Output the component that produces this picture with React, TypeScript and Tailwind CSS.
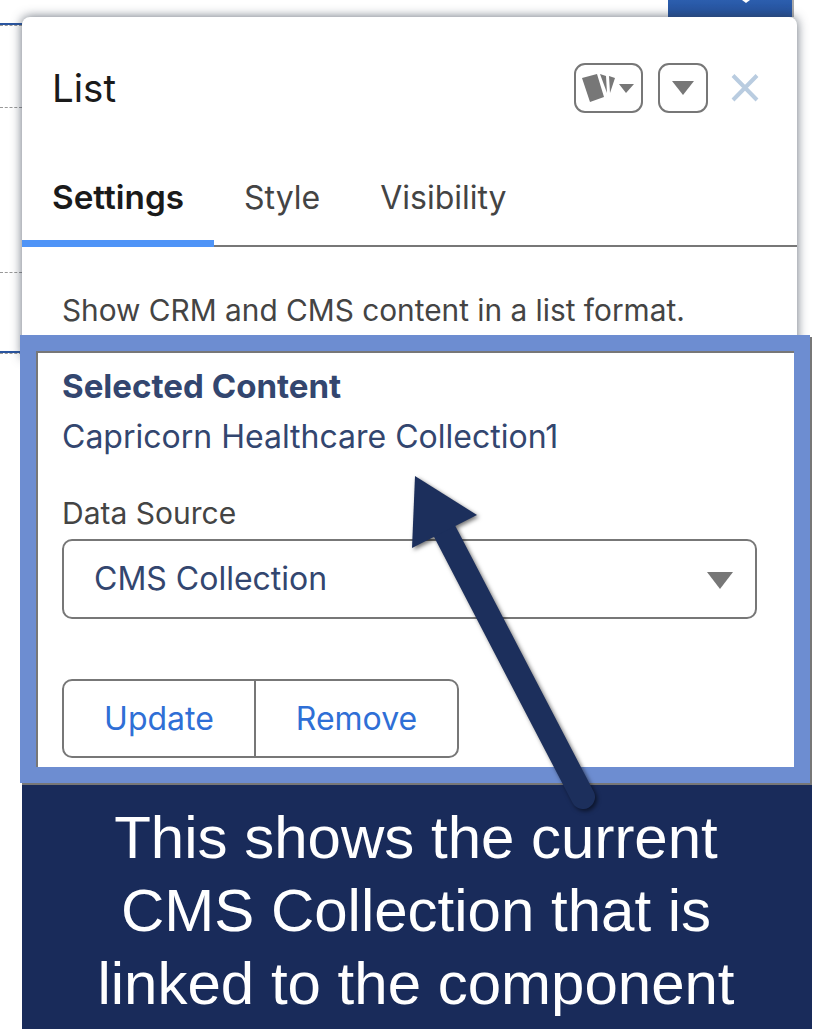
function Rule({ kind }: { kind: "blue" | "dash" }) {
  return kind === "blue" ? (
    <div className="w-full h-[2px] bg-[#2a55a0]" />
  ) : (
    <div className="w-full border-t border-dashed border-[#999999]" />
  );
}

function Caret({ w, h, className }: { w: number; h: number; className?: string }) {
  return (
    <svg className={className} width={w} height={h} viewBox={`0 0 ${w} ${h}`}>
      <path d={`M0 0 H${w} L${w / 2} ${h} Z`} fill="#777777" />
    </svg>
  );
}

export default function App() {
  return (
    <div className="relative w-[832px] h-[1032px] overflow-hidden bg-white font-['Inter',sans-serif]">
      {/* page content peeking out behind the panel */}
      <div className="absolute inset-0 flex items-start">
        <div className="flex flex-col w-[22px] pt-[23px]">
          <Rule kind="blue" />
          <Rule kind="dash" />
          <div className="h-[81px]" />
          <Rule kind="dash" />
          <div className="h-[164px]" />
          <Rule kind="dash" />
          <div className="h-[78px]" />
          <Rule kind="blue" />
          <Rule kind="dash" />
        </div>
        <div className="ml-[646px] flex w-[124px] h-[17px] pl-[73px] bg-gradient-to-b from-[#2c5eae] to-[#24509a]">
          <svg width="10" height="4" viewBox="0 0 10 4"><path d="M1 0 H9 L5 3 Z" fill="#ffffff" /></svg>
        </div>
        <div className="w-[2px] h-[17px] bg-[#aaaaaa]" />
      </div>

      <div className="relative pt-[17px]">
        <div className="ml-[22px] w-[775px] h-[340px] rounded-t-[8px] bg-white shadow-[0_0_11px_rgba(50,60,75,0.75)]">
          <div className="flex items-center h-[141px] pl-[30px] pr-[37px]">
            <div className="text-[38.5px] leading-[46px] text-[#1a1a1a] flex-1">List</div>
            <div className="flex items-center justify-center w-[69px] h-[50px] rounded-[11px] border-2 border-[#777777]">
              <svg width="65" height="46" viewBox="2 2 65 46">
                <path d="M8 15 L23 11 L30 34 L16 39 Z M26 11 L32 13 L33 30 Z M35 13 L41 15 L36 30 Z M45 21 H60 L52 30 Z" fill="#777777" />
              </svg>
            </div>
            <div className="ml-[15px] flex items-center justify-center w-[50px] h-[50px] rounded-[11px] border-2 border-[#777777]">
              <Caret w={22} h={14} />
            </div>
            <svg className="ml-[22px]" width="30" height="30" viewBox="0 0 30 30">
              <path d="M3 2.5 L27 27 M27 2.5 L3 27" stroke="#b9cce0" strokeWidth="4" fill="none" />
            </svg>
          </div>
          <div className="flex h-[89px] border-b-2 border-[#777777] text-[32px] leading-[38px]">
            <div className="w-[192px] h-[89px] pl-[30px] pt-[20px] border-b-[7px] border-[#4f94f7] text-[33.3px] font-semibold text-[#1a1a1a]">
              Settings
            </div>
            <div className="pl-[30px] pt-[21px] text-[#444444]">Style</div>
            <div className="pl-[60px] pt-[21px] text-[#444444]">Visibility</div>
          </div>
          <div className="pl-[40px] pt-[45px] text-[29.8px] leading-[36px] text-[#444444] whitespace-nowrap">
            Show CRM and CMS content in a list format.
          </div>
        </div>

        {/* highlighted section */}
        <div className="-mt-[22px] ml-[20px] w-[790px] h-[448px] relative border-[16px] border-[#6d8dd1] shadow-[2px_2px_0_#777777] bg-white">
          <div className="h-full pl-[26px] pt-[17px] shadow-[inset_2px_2px_0_#777777]">
            <div className="text-[33.1px] leading-[36px] font-bold text-[#33466f]">Selected Content</div>
            <div className="mt-[14px] text-[32px] leading-[38px] text-[#33466f]">Capricorn Healthcare Collection1</div>
            <div className="mt-[39px] text-[30px] leading-[36px] text-[#444444]">Data Source</div>
            <div className="mt-[8px] flex items-center justify-between w-[695px] h-[80px] pl-[30px] pr-[22px] rounded-[10px] border-2 border-[#777777] text-[32px] text-[#33466f]">
              <span>CMS Collection</span>
              <Caret w={26} h={17} className="mt-[2px]" />
            </div>
            <div className="mt-[60px] flex w-[397px] h-[79px] rounded-[10px] border-2 border-[#777777] text-[32px] text-[#2f6fd6]">
              <div className="flex items-center justify-center w-[192px] border-r-2 border-[#777777]">Update</div>
              <div className="flex items-center justify-center flex-1">Remove</div>
            </div>
          </div>
        </div>

        {/* caption */}
        <div className="mt-[2px] ml-[22px] w-[790px] h-[244px] bg-[#192b5a] pt-[16px] pr-[2px] text-center font-['Liberation_Sans',sans-serif] text-[60px] leading-[73px] text-white">
          This shows the current
          <br />
          CMS Collection that is
          <br />
          linked to the component
        </div>
      </div>

      {/* callout arrow lying over the panel */}
      <svg className="absolute inset-0 pointer-events-none" width="832" height="1032" viewBox="0 0 832 1032" style={{ filter: "drop-shadow(2px 2px 2px rgba(0,0,0,0.55))" }}>
        <path d="M445 532 L583 797" stroke="#1c2f5c" strokeWidth="24" strokeLinecap="round" fill="none" />
        <path d="M415 476 L477 515 L412 548 Z" fill="#1c2f5c" />
      </svg>
    </div>
  );
}
